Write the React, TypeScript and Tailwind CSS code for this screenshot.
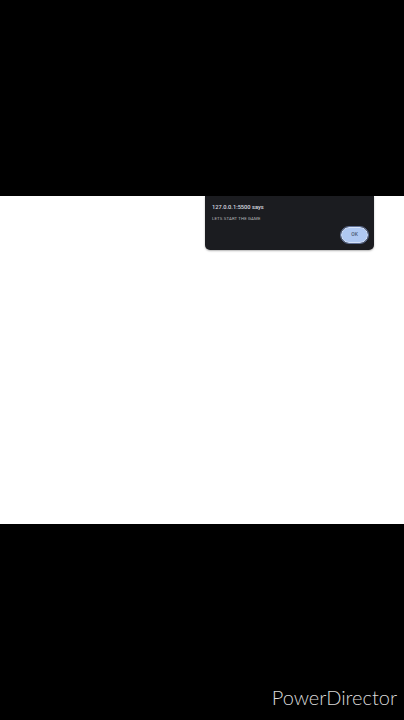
import React from 'react';

const App: React.FC = () => {
    return (
        <div className="flex flex-col w-[404px] h-[720px] bg-black overflow-hidden font-['Roboto',sans-serif]">
            <div className="h-[196px] shrink-0 bg-black" />

            <div className="h-[328px] shrink-0 bg-white pl-[205px]">
                <div className="flex flex-col w-[169px] h-[54px] bg-[#1b1c20] rounded-b-[5px] shadow-[0_1px_2px_rgba(0,0,0,0.3)] pl-[7px] pr-[6px]">
                    <p className="mt-[7px] text-[5.7px] leading-[8px] font-medium text-[#dcdde0]">127.0.0.1:5500 says</p>
                    <p className="mt-[5px] text-[4.3px] leading-[6px] tracking-[0.15px] text-[#b9babd]">LETS START THE GAME</p>
                    <div className="flex justify-end mt-[5px]">
                        <button className="flex items-center justify-center w-[27px] h-[16px] rounded-full bg-[#afc8f2] border border-[#d5e2f8] outline outline-1 outline-[#5f6f94] text-[5px] font-medium text-[#4d5a73]">
                            OK
                        </button>
                    </div>
                </div>
            </div>

            <div className="flex flex-1 items-end justify-end pr-[7px] pb-[10px]">
                <span className="text-[20px] leading-[26px] font-light text-[#d9d9d9] font-['Lato',sans-serif]">PowerDirector</span>
            </div>
        </div>
    );
};

export default App;
